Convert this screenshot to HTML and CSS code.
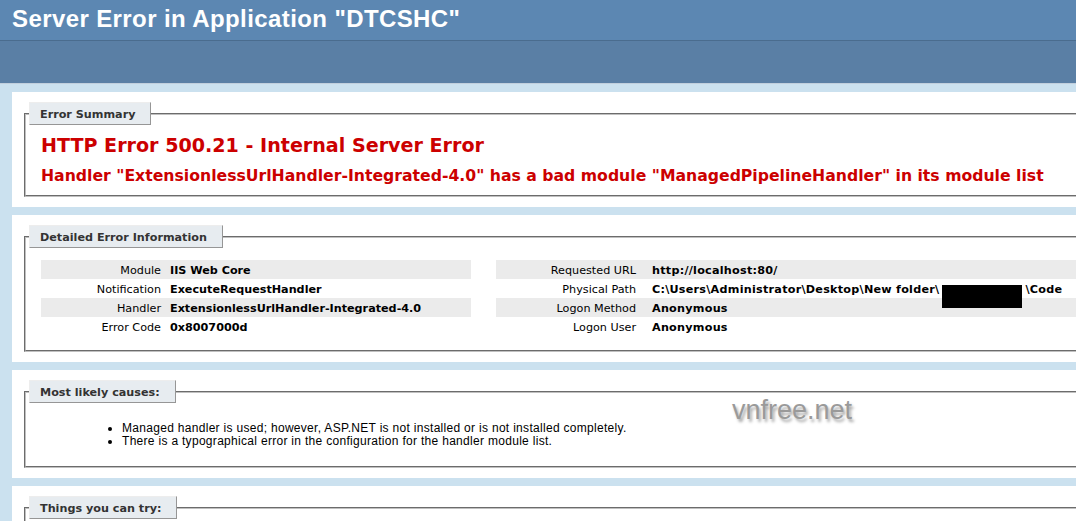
FILE: index.html
```html
<!DOCTYPE html>
<html lang="en">
<head>
  <meta charset="UTF-8">
  <meta name="viewport" content="width=device-width, initial-scale=1.0">
  <title>IIS 10.0 Detailed Error - 500.21 - Internal Server Error</title>
  <link rel="stylesheet" href="styles.css">
</head>
<body>
  <div id="header"><h1>Server Error in Application "DTCSHC"</h1></div>
  <div id="server_version"></div>
  <div id="content">
    <div class="summary-container">
      <fieldset>
        <legend>Error Summary</legend>
        <h2>HTTP Error 500.21 - Internal Server Error</h2>
        <h3>Handler "ExtensionlessUrlHandler-Integrated-4.0" has a bad module "ManagedPipelineHandler" in its module list</h3>
      </fieldset>
    </div>

    <div class="content-container">
      <fieldset>
        <legend>Detailed Error Information</legend>
        <div class="details">
          <div id="details-left">
            <table>
              <tr class="alt"><th>Module</th><td>IIS Web Core</td></tr>
              <tr><th>Notification</th><td>ExecuteRequestHandler</td></tr>
              <tr class="alt"><th>Handler</th><td>ExtensionlessUrlHandler-Integrated-4.0</td></tr>
              <tr><th>Error Code</th><td>0x8007000d</td></tr>
            </table>
          </div>
          <div id="details-right">
            <table>
              <tr class="alt"><th>Requested URL</th><td>http://localhost:80/</td></tr>
              <tr><th>Physical Path</th><td>C:\Users\Administrator\Desktop\New folder\<span class="redacted"></span>\Code</td></tr>
              <tr class="alt"><th>Logon Method</th><td>Anonymous</td></tr>
              <tr><th>Logon User</th><td>Anonymous</td></tr>
            </table>
          </div>
        </div>
      </fieldset>
    </div>

    <div class="content-container">
      <fieldset>
        <legend>Most likely causes:</legend>
        <ul>
          <li>Managed handler is used; however, ASP.NET is not installed or is not installed completely.</li>
          <li>There is a typographical error in the configuration for the handler module list.</li>
        </ul>
      </fieldset>
    </div>

    <div class="content-container">
      <fieldset>
        <legend>Things you can try:</legend>
        <div class="spacer"></div>
      </fieldset>
    </div>
  </div>

  <div class="watermark">vnfree.net</div>
</body>
</html>
```

FILE: styles.css
```css
html, body { overflow: hidden; }
body {
  margin: 0;
  background: #cbe1ef;
  font-family: "DejaVu Sans", Verdana, sans-serif;
  font-size: 11.2px;
  color: #000;
}
#header {
  background: #5c87b2;
  padding: 5px 12px 7px 12px;
  color: #fff;
}
h1 {
  margin: 0;
  font-family: "Liberation Sans", Arial, sans-serif;
  font-size: 24px;
  line-height: 28px;
  letter-spacing: .4px;
  white-space: nowrap;
}
#server_version {
  height: 42px;
  background: #5a7fa5;
  border-top: 1px solid #4a6c8e;
  border-bottom: 1px solid #c1cfdd;
}
#content {
  padding-left: 12px;
  width: 1287px;
}
.summary-container, .content-container {
  background: #fff;
  padding: 10px;
  margin-top: 8px;
}
fieldset {
  margin: 0 2px;
  padding: 0 15px 10px 15px;
  border: 2px groove #c0c0c0;
  min-width: 0;
}
legend {
  margin: 0 0 0 -12px;
  padding: 5px 15px 3px 10px;
  color: #333;
  font-weight: bold;
  line-height: 13px;
  background: #e7ecf0;
  border-top: 1px solid #ededed;
  border-left: 1px solid #ededed;
  border-right: 1px solid #969696;
  border-bottom: 1px solid #969696;
}
h2 {
  margin: 10px 0 0 0;
  font-size: 19.1px;
  line-height: 22px;
  color: #cc0000;
}
h3 {
  margin: 10px 0 0 0;
  font-size: 15.68px;
  line-height: 18px;
  color: #cc0000;
  white-space: nowrap;
}
.details {
  display: flex;
  gap: 25px;
  margin: 12px 0 4px 0;
}
#details-left { width: 430px; flex: none; }
#details-right { width: 774px; flex: none; }
table {
  width: 100%;
  border-collapse: collapse;
}
th, td {
  padding: 4px 0 2px 0;
  line-height: 13px;
  vertical-align: top;
  white-space: nowrap;
}
th {
  box-sizing: border-box;
  width: 129px;
  padding-right: 9px;
  font-weight: normal;
  text-align: right;
}
#details-right th { width: 156px; padding-right: 16px; }
td { font-weight: bold; text-align: left; }
#details-right td { letter-spacing: .25px; }
tr.alt th, tr.alt td { background: #ebebeb; }
.redacted {
  display: inline-block;
  width: 80px;
  height: 23px;
  margin: 2px 3px -12px 3px;
  vertical-align: top;
  background: #000;
}
ul {
  margin: 19px 0 9px 0;
  padding-left: 81px;
  font-family: "Liberation Sans", Arial, sans-serif;
  font-size: 12px;
  line-height: 12.7px;
  letter-spacing: .3px;
}
.spacer { height: 40px; }
.watermark {
  position: absolute;
  left: 732px;
  top: 395px;
  font-family: "Liberation Sans", Arial, sans-serif;
  font-size: 27px;
  line-height: 31px;
  color: #9a9a9a;
  text-shadow: 2px 3px 3px rgba(0, 0, 0, .35);
}
```
